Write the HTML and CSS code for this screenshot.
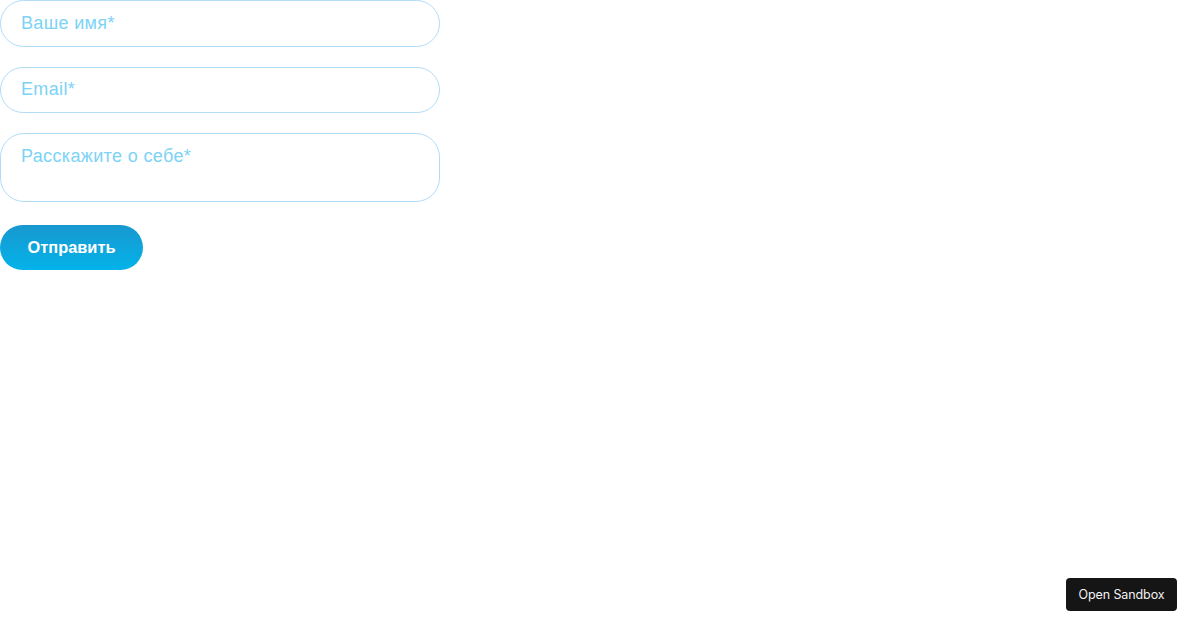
FILE: index.html
```html
<!DOCTYPE html>
<html lang="ru">
<head>
<meta charset="utf-8">
<title>Form</title>
<link rel="stylesheet" href="styles.css">
</head>
<body>
<form class="form">
  <input class="field" type="text" placeholder="Ваше имя*">
  <input class="field" type="email" placeholder="Email*">
  <textarea class="field area" placeholder="Расскажите о себе*"></textarea>
  <button class="submit" type="button">Отправить</button>
</form>
<a class="sandbox" href="#">Open Sandbox</a>
</body>
</html>
```
FILE: styles.css
```css
html, body { margin: 0; padding: 0; background: #fff; }
body { width: 1200px; height: 630px; position: relative; overflow: hidden; }
.form {
  display: flex;
  flex-direction: column;
  align-items: flex-start;
  width: 440px;
}
.field {
  box-sizing: border-box;
  width: 440px;
  height: 46.5px;
  border: 1px solid #b0dcf8;
  border-radius: 24px;
  padding: 0 20px;
  margin: 0 0 20px 0;
  font-family: "Liberation Sans", Arial, sans-serif;
  font-size: 18px;
  letter-spacing: 0.35px;
  color: #333;
  background: #fff;
  outline: none;
}
.field::placeholder { color: #7cd3f6; opacity: 1; }
.area {
  height: 68.5px;
  padding: 11px 20px;
  resize: none;
  margin-bottom: 23.5px;
  line-height: 22px;
}
.submit {
  height: 45px;
  width: 143px;
  border: none;
  border-radius: 23px;
  background: linear-gradient(180deg, #1898cf 0%, #03b3ea 100%);
  color: #fff;
  font-family: "Liberation Sans", Arial, sans-serif;
  font-weight: bold;
  font-size: 16.4px;
  letter-spacing: 0;
  padding: 0;
  cursor: pointer;
}
.sandbox {
  position: absolute;
  left: 1066px;
  top: 578px;
  width: 111px;
  height: 33px;
  box-sizing: border-box;
  background: #151515;
  border-radius: 4px;
  color: #f2f2f2;
  font-family: Inter, "Liberation Sans", sans-serif;
  font-size: 12.5px;
  letter-spacing: -0.1px;
  display: flex;
  align-items: center;
  justify-content: center;
  text-decoration: none;
}
```
